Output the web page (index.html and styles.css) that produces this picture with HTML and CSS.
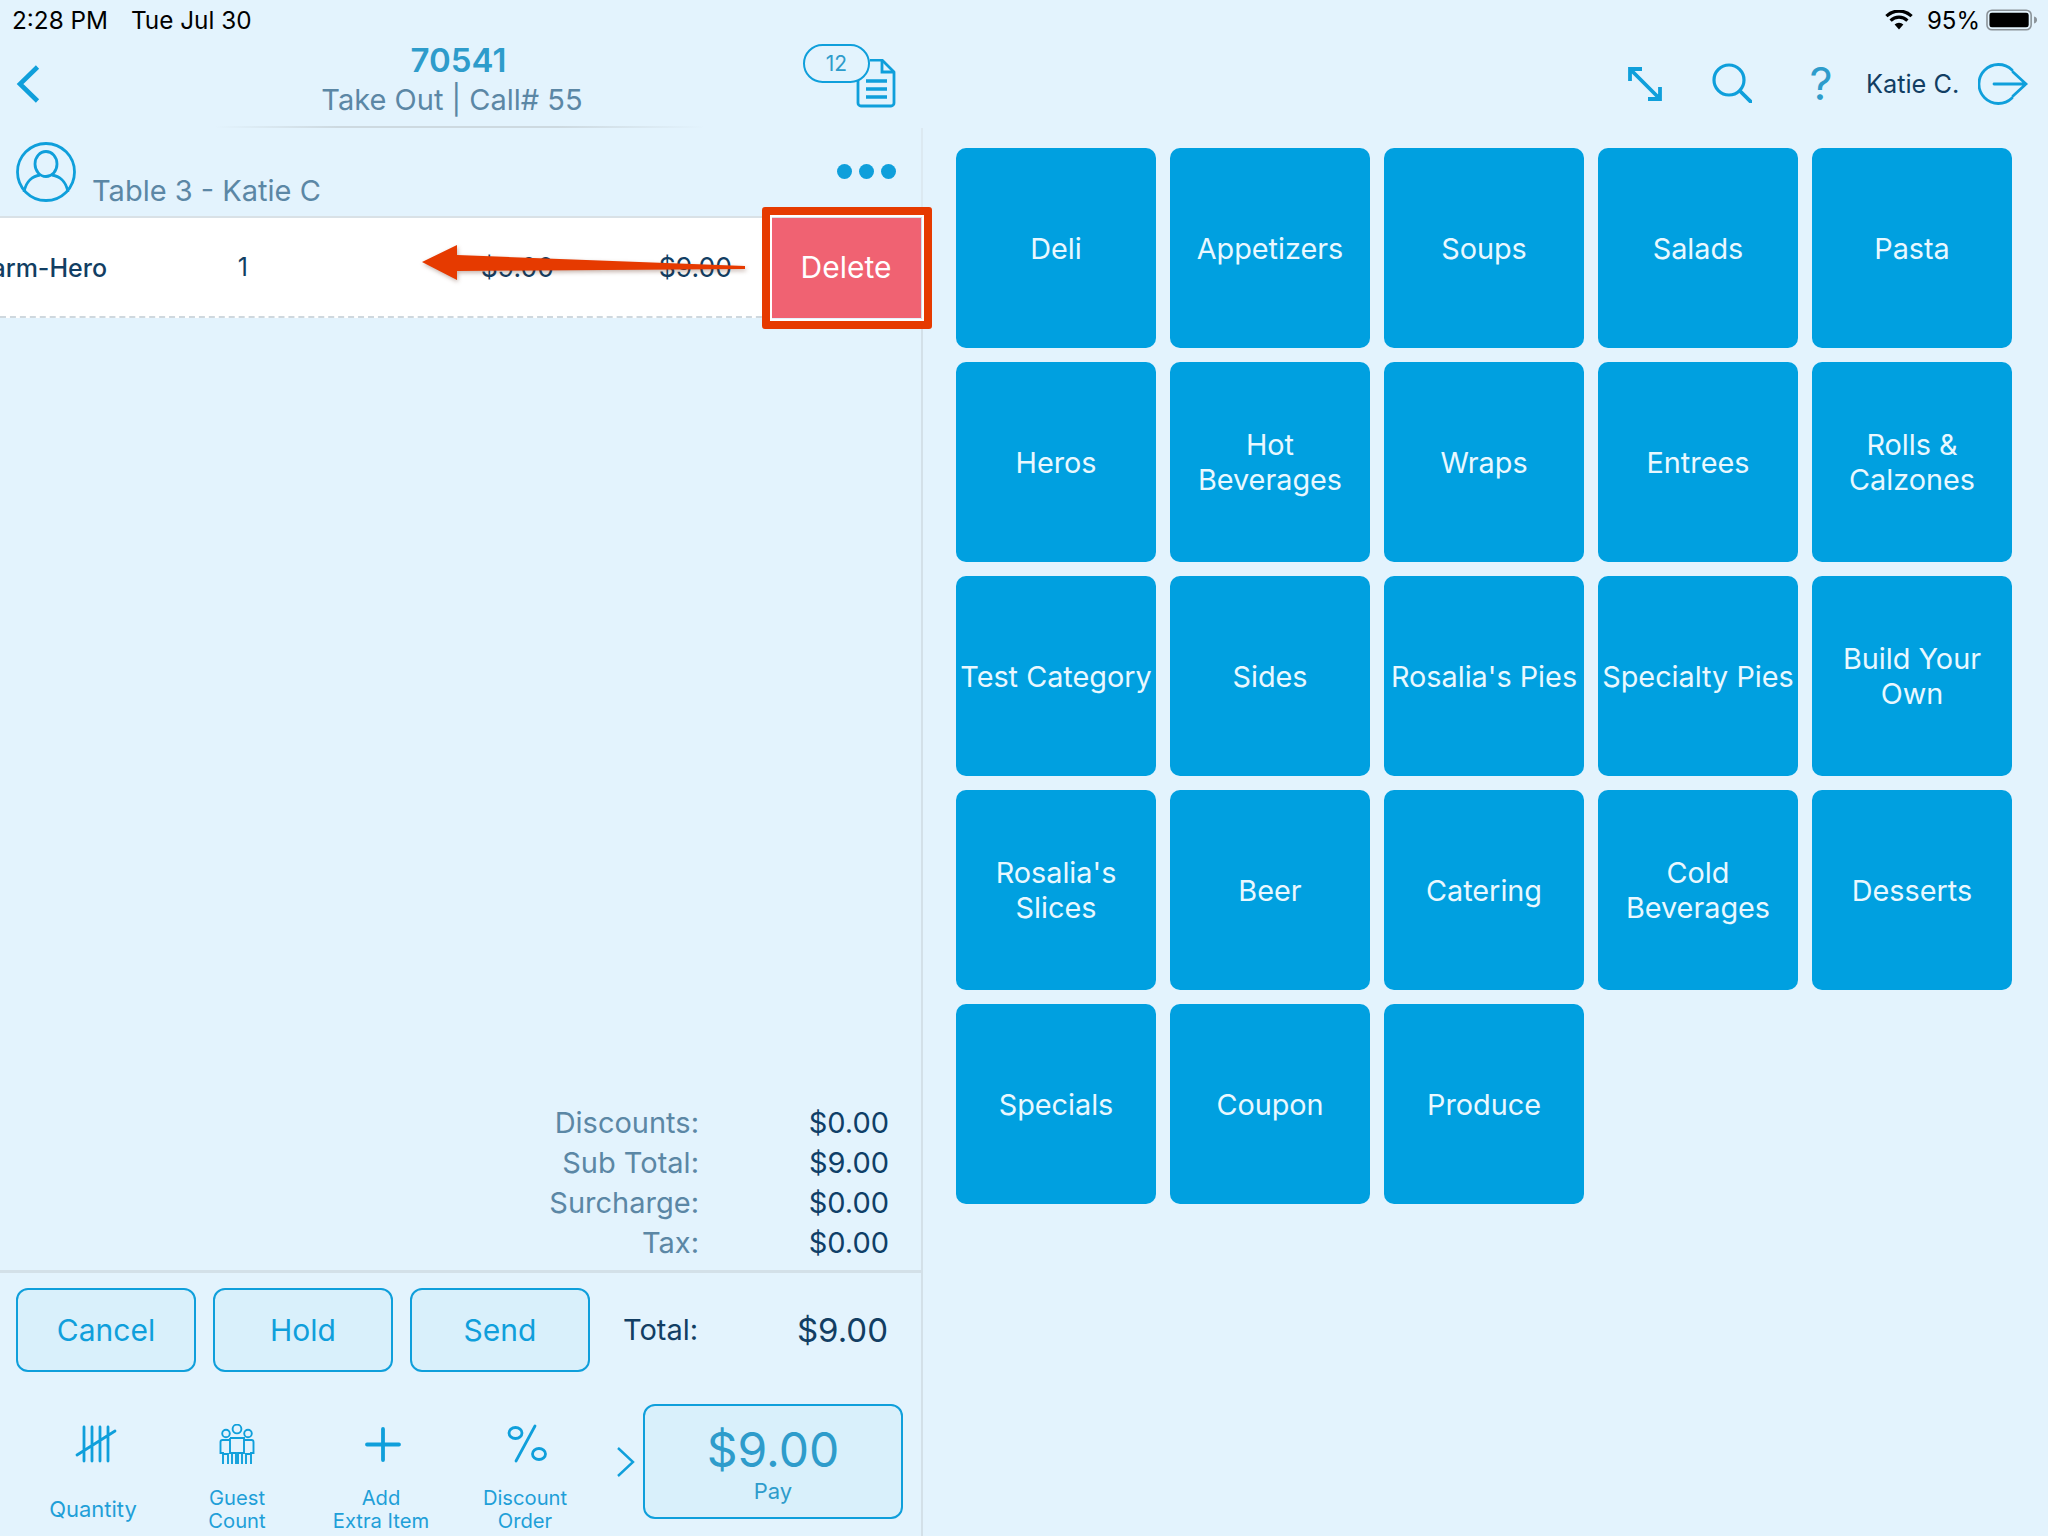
FILE: index.html
```html
<!DOCTYPE html>
<html lang="en">
<head>
<meta charset="utf-8">
<title>Order 70541</title>
<link rel="stylesheet" href="styles.css">
</head>
<body>
<div class="app">
  <div class="status">
    <div class="status-left"><span>2:28 PM</span><span>Tue Jul 30</span></div>
    <div class="status-right">
      <svg class="wifi" viewBox="0 0 28 20"><path d="M14 19.500 9.600 14.600a6.400 6.400 0 0 1 8.800 0z" fill="#000"/><path d="M5.600 10.600a12 12 0 0 1 16.800 0M1.400 6.200a18 18 0 0 1 25.200 0" fill="none" stroke="#000" stroke-width="3.200"/></svg>
      <span class="pct">95%</span>
      <svg class="battery" viewBox="0 0 54 22"><rect x="1" y="1" width="45" height="20" rx="5" fill="none" stroke="#8a9298" stroke-width="1.600"/><rect x="3.500" y="3.500" width="40" height="15" rx="2.500" fill="#000"/><path d="M49 7.500c2 .5 3 2 3 3.500s-1 3-3 3.500z" fill="#8a9298"/></svg>
    </div>
  </div>
  <div class="main">
    <section class="left">
      <header class="order-head">
        <svg class="back" viewBox="0 0 24 38"><path d="M21.500 2 4 19l17.500 17" fill="none" stroke="#0f9fdb" stroke-width="4.600"/></svg>
        <div class="order-title">
          <div class="order-num">70541</div>
          <div class="order-sub">Take Out | Call# 55</div>
        </div>
        <div class="notes">
          <svg class="doc" viewBox="0 0 40 49"><path d="M2 10V44a3 3 0 0 0 3 3H35a3 3 0 0 0 3-3V13L26 1H14" fill="#e3f3fd" stroke="#0f9fdb" stroke-width="2.800" stroke-linejoin="round"/><path d="M26 2V13H37" fill="none" stroke="#0f9fdb" stroke-width="2.800"/><path d="M10 22H31M10 30H31M10 38H31" stroke="#0f9fdb" stroke-width="3.400"/></svg>
          <div class="pill">12</div>
        </div>
      </header>
      <div class="ticket">
        <div class="customer">
          <svg class="avatar" viewBox="0 0 60 60"><g fill="none" stroke="#0f9fdb" stroke-width="2.800"><circle cx="30" cy="30" r="28.500"/><ellipse cx="30" cy="22" rx="11" ry="12.500"/><path d="M8 50c2-11 9-16 16-17M52 50c-2-11-9-16-16-17"/></g></svg>
          <span class="customer-name">Table 3 - Katie C</span>
          <div class="dots"><i></i><i></i><i></i></div>
        </div>
        <div class="ticket-body">
          <div class="item-row">
            <div class="item-name"><span>Farm-Hero</span></div>
            <div class="item-qty">1</div>
            <div class="item-price">$9.00</div>
            <div class="item-total">$9.00</div>
            <div class="delete">Delete</div>
          </div>
          <div class="spacer"></div>
          <dl class="summary">
            <dt>Discounts:</dt><dd>$0.00</dd>
            <dt>Sub Total:</dt><dd>$9.00</dd>
            <dt>Surcharge:</dt><dd>$0.00</dd>
            <dt>Tax:</dt><dd>$0.00</dd>
          </dl>
          <div class="actions">
            <button class="btn">Cancel</button>
            <button class="btn">Hold</button>
            <button class="btn">Send</button>
            <span class="total-label">Total:</span>
            <span class="total-value">$9.00</span>
          </div>
          <div class="tools">
            <div class="tool tool-single">
              <svg class="tool-shift" viewBox="0 0 44 40"><g fill="none" stroke="#0f9fdb" stroke-width="2.800" stroke-linecap="round"><path d="M10 3V37M18 3V37M26 3V37M34 3V37M3 31 41 7"/></g></svg>
              <span>Quantity</span>
            </div>
            <div class="tool">
              <svg viewBox="0 0 44 40"><g fill="none" stroke="#0f9fdb" stroke-width="1.900"><circle cx="22" cy="5" r="4.400"/><circle cx="11" cy="9.500" r="3.800"/><circle cx="33" cy="9.500" r="3.800"/><path d="M15 14H29V29H27V40M27 29H23V40M21 40V29H17V40M17 29H15V14M15 16H7.500Q5.500 16 5.500 18V29H8V40M8 30H13V40M29 16H36.500Q38.500 16 38.500 18V29H36V40M36 30H31V40"/></g></svg>
              <span>Guest<br>Count</span>
            </div>
            <div class="tool">
              <svg class="tool-shift-s" viewBox="0 0 44 40"><path d="M22 5V36M6 20.500H38" fill="none" stroke="#0f9fdb" stroke-width="3.800" stroke-linecap="round"/></svg>
              <span>Add<br>Extra Item</span>
            </div>
            <div class="tool">
              <svg class="tool-shift" viewBox="0 0 44 40"><g fill="none" stroke="#0f9fdb" stroke-width="2.800"><ellipse cx="9.500" cy="9" rx="6.500" ry="5.500"/><ellipse cx="33" cy="30" rx="6.500" ry="5.500"/><path d="M29 2 10 37" stroke-linecap="round"/></g></svg>
              <span>Discount<br>Order</span>
            </div>
            <svg class="more" viewBox="0 0 20 32"><path d="M2 2 17 16 2 30" fill="none" stroke="#0f9fdb" stroke-width="2.400"/></svg>
            <button class="pay"><span class="pay-amount">$9.00</span><span class="pay-label">Pay</span></button>
          </div>
        </div>
      </div>
    </section>
    <section class="right">
      <div class="toolbar">
        <svg class="ic-expand" viewBox="0 0 36 36"><path d="M4 4 32 32M3 15V3H15M33 21V33H21" fill="none" stroke="#0f9fdb" stroke-width="3.800"/></svg>
        <svg class="ic-search" viewBox="0 0 40 40"><circle cx="17" cy="17" r="15" fill="none" stroke="#0f9fdb" stroke-width="3.200"/><path d="M28 28 39 39" stroke="#0f9fdb" stroke-width="3.800" stroke-linecap="round"/></svg>
        <span class="ic-help">?</span>
        <span class="user">Katie C.</span>
        <svg class="ic-logout" viewBox="0 0 50 42"><path d="M34 7A19.500 19.500 0 1 0 34 35" fill="none" stroke="#0f9fdb" stroke-width="2.800" stroke-linecap="round"/><path d="M16 21H48M35 9 48 21 35 33" fill="none" stroke="#0f9fdb" stroke-width="2.800" stroke-linecap="round"/></svg>
      </div>
      <div class="grid">
        <div class="tile">Deli</div>
        <div class="tile">Appetizers</div>
        <div class="tile">Soups</div>
        <div class="tile">Salads</div>
        <div class="tile">Pasta</div>
        <div class="tile">Heros</div>
        <div class="tile">Hot<br>Beverages</div>
        <div class="tile">Wraps</div>
        <div class="tile">Entrees</div>
        <div class="tile">Rolls &amp;<br>Calzones</div>
        <div class="tile">Test Category</div>
        <div class="tile">Sides</div>
        <div class="tile">Rosalia's Pies</div>
        <div class="tile">Specialty Pies</div>
        <div class="tile">Build Your<br>Own</div>
        <div class="tile">Rosalia's<br>Slices</div>
        <div class="tile">Beer</div>
        <div class="tile">Catering</div>
        <div class="tile">Cold<br>Beverages</div>
        <div class="tile">Desserts</div>
        <div class="tile">Specials</div>
        <div class="tile">Coupon</div>
        <div class="tile">Produce</div>
      </div>
    </section>
  </div>
  <svg class="arrow" viewBox="0 0 340 50"><path d="M6 22 41 5 41 15 329 26V29L41 31 41 40Z" fill="#e63a00"/></svg>
  <div class="callout"></div>
</div>
</body>
</html>
```
FILE: styles.css
```css
* { box-sizing: border-box; }
html, body { margin: 0; padding: 0; }
body { width: 2048px; height: 1536px; background: #e3f3fd; font-family: Inter, "Noto Sans", sans-serif; overflow: hidden; }
.app { position: relative; width: 2048px; height: 1536px; display: flex; flex-direction: column; }

.status { height: 40px; flex: none; display: flex; justify-content: space-between; align-items: center; padding: 0 9px 0 12px; font-size: 24.300px; color: #000; }
.status-left { display: flex; gap: 23px; }
.status-right { display: flex; align-items: center; }
.wifi { width: 28px; height: 20px; }
.pct { margin-left: 14px; font-size: 24px; }
.battery { width: 53px; height: 22px; margin-left: 6px; }

.main { flex: 1; display: flex; min-height: 0; }
.left { width: 923px; flex: none; display: flex; flex-direction: column; }

.order-head { height: 88px; flex: none; display: flex; padding-left: 16px; position: relative; }
.order-head::after { content: ""; position: absolute; left: 215px; width: 490px; bottom: 0; height: 2px; background: linear-gradient(90deg, transparent, #cdd9e0 25%, #cdd9e0 70%, transparent); }
.back { width: 24px; height: 38px; margin-top: 25px; margin-right: 160px; flex: none; }
.order-title { width: 504px; flex: none; text-align: center; padding-top: 1px; }
.order-num { font-size: 33px; font-weight: 600; line-height: 38px; color: #2e9ccb; padding-left: 13px; }
.order-sub { font-size: 29px; line-height: 41px; color: #5b87a5; }
.notes { position: relative; width: 94px; margin-left: 99px; }
.doc { position: absolute; left: 53px; top: 19px; width: 40px; height: 49px; }
.pill { position: absolute; left: 0; top: 4px; width: 67px; height: 39px; border: 2px solid #0f9fdb; border-radius: 20px; background: #e3f3fd; color: #2e9ccb; font-size: 21px; line-height: 35px; text-align: center; }

.ticket { flex: 1; min-height: 0; display: flex; flex-direction: column; }
.customer { height: 88px; flex: none; display: flex; align-items: flex-start; padding: 14px 25px 0 16px; border-right: 2px solid #dce9f1; }
.avatar { width: 60px; height: 60px; flex: none; }
.customer-name { margin: 31px 0 0 16px; font-size: 29px; line-height: 36px; color: #5b87a5; }
.dots { margin: 22px 0 0 auto; display: flex; gap: 7px; }
.dots i { width: 15px; height: 15px; border-radius: 50%; background: #0f9fdb; }

.ticket-body { flex: 1; min-height: 0; display: flex; flex-direction: column; border-right: 2px solid #d3e0e8; }
.item-row { height: 102px; flex: none; display: flex; align-items: center; background: #fff; border-top: 2px solid #d9e1e6; border-bottom: 2px dashed #cfd8de; font-size: 26.500px; color: #123e63; }
.item-name { width: 107px; flex: none; display: flex; justify-content: flex-end; overflow: hidden; padding-top: 2px; font-size: 25px; font-weight: 500; white-space: nowrap; }
.item-qty { width: 141px; flex: none; text-align: right; font-size: 25px; }
.item-price { width: 306px; flex: none; text-align: right; }
.item-total { width: 178px; flex: none; text-align: right; }
.delete { margin-left: auto; width: 150px; height: 100px; margin-bottom: -2px; padding-bottom: 2px; background: #f06272; color: #fff; display: flex; align-items: center; justify-content: center; font-size: 30px; }

.spacer { flex: 1; }
.summary { margin: 0; padding: 0 32px 0 0; display: grid; grid-template-columns: 699px 1fr; grid-auto-rows: 39.800px; align-items: center; font-size: 29px; }
.summary dt { text-align: right; color: #5b87a5; }
.summary dd { margin: 0; text-align: right; color: #0f3f68; }

.actions { margin-top: 8px; height: 132px; flex: none; border-top: 3px solid #d3e0e8; display: flex; align-items: flex-start; padding: 15px 33px 0 16px; }
.btn { width: 180px; height: 84px; margin-right: 17px; border: 2px solid #0f9fdb; border-radius: 12px; background: #d9f0fb; color: #0f9fdb; font: 30px Inter, sans-serif; padding: 0; flex: none; }
.total-label { margin-left: 16px; font-size: 29px; line-height: 84px; color: #123e63; }
.total-value { margin-left: auto; font-size: 33px; line-height: 84px; color: #123e63; }

.tools { flex: none; height: 134px; padding-top: 2px; display: flex; align-items: flex-start; padding-left: 21px; }
.tool { width: 144px; flex: none; height: 127px; display: flex; flex-direction: column; align-items: center; color: #1f9fd8; font-size: 20.200px; line-height: 23px; text-align: center; }
.tool svg { width: 44px; height: 40px; margin-top: 20px; flex: none; }
.tool .tool-shift { margin-left: 5px; }
.tool .tool-shift-s { margin-left: 3px; }
.tool span { margin-top: 22px; white-space: nowrap; }
.tool-single span { margin-top: 34px; font-size: 22px; }
.more { width: 20px; height: 32px; margin: 42px 0 0 19px; flex: none; }
.pay { margin-left: 7px; width: 260px; height: 115px; border: 2px solid #0f9fdb; border-radius: 12px; background: #d9f0fb; padding: 0; display: flex; flex-direction: column; align-items: center; font-family: Inter, sans-serif; flex: none; }
.pay-amount { font-size: 48px; line-height: 60px; margin-top: 14px; color: #2e9ccb; }
.pay-label { font-size: 22px; line-height: 28px; margin-top: -3px; color: #2e9ccb; }

.right { flex: 1; min-width: 0; padding-left: 33px; }
.toolbar { height: 108px; display: flex; align-items: flex-start; }
.ic-expand { width: 36px; height: 36px; margin: 26px 0 0 671px; flex: none; }
.ic-search { width: 40px; height: 40px; margin: 23px 0 0 49px; flex: none; }
.ic-help { margin: 18px 0 0 57px; width: 24px; font-size: 45px; line-height: 52px; color: #2e9ccb; text-align: center; flex: none; }
.user { margin: 26px 0 0 33px; font-size: 25.300px; line-height: 36px; color: #123e63; flex: none; }
.ic-logout { width: 50px; height: 42px; margin: 23px 0 0 19px; flex: none; }

.grid { display: grid; grid-template-columns: repeat(5, 200px); grid-auto-rows: 200px; gap: 14px; }
.tile { background: #00a0e0; border-radius: 10px; color: #e9f8ff; font-size: 28.800px; line-height: 35px; display: flex; align-items: center; justify-content: center; text-align: center; white-space: nowrap; }

.arrow { position: absolute; left: 416px; top: 240px; width: 340px; height: 50px; filter: drop-shadow(1px 2px 2px rgba(90, 40, 20, .35)); }
.callout { position: absolute; left: 762px; top: 207px; width: 170px; height: 122px; border: 8px solid #e63a00; border-radius: 3px; box-shadow: inset 0 0 0 2px #fff; }
```
